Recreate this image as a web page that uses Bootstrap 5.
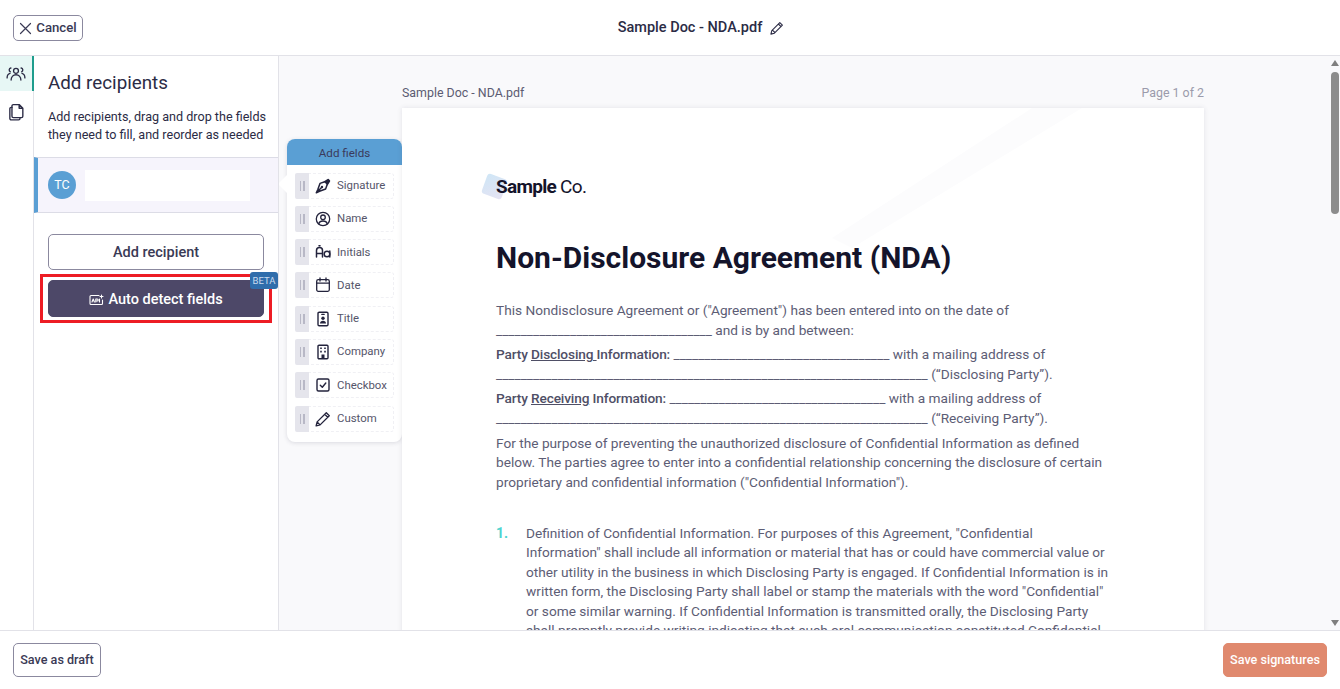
<!DOCTYPE html>
<html lang="en">
<head>
    <meta charset="UTF-8">
    <meta name="viewport" content="width=device-width, initial-scale=1.0">
    <title>Sample Doc - NDA.pdf</title>
    <link href="https://cdn.jsdelivr.net/npm/bootstrap@5.3.2/dist/css/bootstrap.min.css" rel="stylesheet">
    <style>
        html, body { height: 100%; }
        body {
            font-family: Roboto, "Liberation Sans", sans-serif;
            color: #2b2b45;
            overflow: hidden;
        }
        .app-shell { height: 689px; }
        .top-bar { height: 56px; padding: 0 13px; border-bottom: 1px solid #e2e2e8; }
        .top-side { width: 200px; }
        .top-side-end { width: 138px; }
        .btn-line {
            --bs-btn-color: #3a3a55;
            --bs-btn-border-color: #8b899f;
            --bs-btn-hover-color: #3a3a55;
            --bs-btn-hover-bg: #f4f4f8;
            --bs-btn-hover-border-color: #8b899f;
            --bs-btn-border-radius: 5px;
            font-weight: 500;
        }
        .btn-cancel { height: 26px; width: 70px; padding: 1px 0 0; font-size: 13.2px; }
        .doc-title { font-size: 14.5px; font-weight: 500; color: #2b2b45; }
        .app-middle { height: 574px; min-height: 0; }
        .side-rail { width: 34px; border-right: 1px solid #e2e2e8; }
        .rail-item { height: 35px; color: #2b2b45; }
        .rail-item-on { background: #e7f7f5; border-right: 2px solid #1e9d8d; margin-right: -1px; }
        .recip-panel { width: 245px; border-right: 1px solid #e2e2e8; background: #fff; }
        .recip-head { padding: 16px 14px 13px; }
        .recip-title { font-size: 18.8px; font-weight: 400; margin: 0 0 14px; line-height: 22px; }
        .recip-desc { font-size: 12.6px; line-height: 18px; margin: 0; color: #2b2b45; white-space: nowrap; }
        .recip-row {
            height: 56px;
            background: #f6f4fc;
            border-top: 1px solid #dcdce6;
            border-bottom: 1px solid #dcdce6;
            border-left: 4px solid #5a9fd4;
            padding-left: 10px;
        }
        .recip-avatar {
            width: 28px; height: 28px; border-radius: 50%;
            background: #5a9fd4; color: #fff; font-size: 12.5px;
        }
        .recip-input { width: 165px; height: 31px; background: #fff; margin-left: 9px; }
        .recip-actions { padding: 21px 14px 0; }
        .btn-add { height: 36px; width: 216px; padding: 1px 0 0; font-size: 14.5px; }
        .detect-box { border: 3px solid #ed1c24; margin: 4px -8px 0; padding: 3px 5px; position: relative; }
        .btn-detect {
            --bs-btn-color: #fff;
            --bs-btn-bg: #4d4868;
            --bs-btn-border-color: #4d4868;
            --bs-btn-hover-color: #fff;
            --bs-btn-hover-bg: #4d4868;
            --bs-btn-border-radius: 5px;
            height: 37px; width: 216px; padding: 2px 0 0; font-size: 14.5px; font-weight: 500;
        }
        .beta-tag {
            position: absolute; top: -5px; right: -9px;
            width: 28px; height: 17px;
            background: #2f6dab; color: #c9dcef;
            border-radius: 3px; font-size: 9.5px; line-height: 17px; text-align: center;
        }
        .doc-area { background: #f9f9fb; min-width: 0; overflow: hidden; }
        .fields-panel {
            width: 115px; height: 303px;
            margin: 83px 0 0 8px;
            background: #fff;
            border-radius: 8px;
            box-shadow: 0 1px 4px rgba(60, 60, 90, .16);
            position: relative;
        }
        .fields-panel::before {
            content: "";
            position: absolute; left: -6px; top: 38px;
            width: 14px; height: 14px;
            background: #fff;
            transform: rotate(45deg);
        }
        .fields-head {
            height: 26px; padding-top: 3px; background: #5a9fd4; color: #3a3a5c;
            border-radius: 8px 8px 0 0; font-size: 11.6px; position: relative;
        }
        .fields-list { padding: 7.5px 8px 0; gap: 7.3px; position: relative; }
        .field-chip { height: 26px; border: 1px dashed #f0f0f4; border-radius: 3px; font-size: 11.4px; color: #55556a; }
        .field-grip { width: 14px; height: 26px; background: #e5e5ec; margin: -1px 0 -1px -1px; gap: 2px; border-radius: 2px 0 0 2px; }
        .field-grip i { display: block; width: 1.5px; height: 10px; background: #b8b8c6; }
        .field-icon { width: 28px; color: #23233c; }
        .doc-col { width: 802px; padding-top: 28px; }
        .doc-meta { height: 24px; font-size: 12.4px; color: #5c5c72; }
        .doc-meta-page { color: #9b9bab; }
        .doc-page {
            background: #fff;
            height: 560px;
            box-shadow: 0 0 5px rgba(60, 60, 90, .12);
            padding: 63px 0 0 94px;
            position: relative;
        }
        .page-streak { position: absolute; top: 0; left: 380px; }
        .logo-row { height: 32px; margin-left: -15px; position: relative; }
        .logo-name { font-size: 19px; color: #14142b; margin-left: -15px; letter-spacing: -.7px; position: relative; }
        .logo-name b { font-weight: 700; }
        .doc-heading { font-size: 30px; font-weight: 700; color: #14142b; margin: 35px 0 0; line-height: 40px; white-space: nowrap; }
        .doc-text {
            font-size: 13.68px; line-height: 19.75px; color: #5d5d75; white-space: nowrap; margin: 0;
            position: relative;
        }
        .doc-intro { margin-top: 23px; }
        .doc-party { margin-top: 4.7px; }
        .doc-party strong { font-weight: 500; color: #4f4f66; letter-spacing: -.14px; }
        .doc-list { margin-top: 31px; }
        .doc-list .doc-text { line-height: 19.5px; }
        .doc-num { width: 30px; color: #4fd3cf; font-weight: 700; font-size: 14px; line-height: 19.5px; }
        .fake-scroll { width: 11px; padding-top: 4px; }
        .arrow-up { width: 0; height: 0; border: 4.5px solid transparent; border-top: 0; border-bottom: 6px solid #7f7f7f; }
        .arrow-down { width: 0; height: 0; border: 4.5px solid transparent; border-bottom: 0; border-top: 6px solid #7f7f7f; margin-bottom: 4px; }
        .scroll-thumb { width: 8px; height: 142px; background: #8c8c8c; border-radius: 4px; margin-top: 6px; }
        .bottom-bar { height: 59px; padding: 0 13px; border-top: 1px solid #e2e2e8; background: #fff; position: relative; }
        .btn-draft { height: 34px; width: 88px; padding: 1px 0 0; font-size: 12.6px; }
        .btn-save {
            --bs-btn-color: #fff;
            --bs-btn-bg: #e0896e;
            --bs-btn-border-color: #e0896e;
            --bs-btn-hover-color: #fff;
            --bs-btn-hover-bg: #d97c60;
            --bs-btn-border-radius: 5px;
            height: 34px; width: 104px; padding: 1px 0 0; font-size: 12.6px; font-weight: 500;
        }
        .ico { fill: none; stroke: currentColor; stroke-linecap: round; stroke-linejoin: round; }
    </style>
</head>
<body>
    <div class="app-shell d-flex flex-column">

        <header class="top-bar d-flex align-items-center justify-content-between">
            <div class="top-side">
                <button type="button" class="btn btn-line btn-cancel d-inline-flex align-items-center justify-content-center gap-1">
                    <svg class="ico" width="13" height="13" viewBox="0 0 13 13" stroke-width="1.2"><path d="M1.500 1.500l10 10M11.500 1.500l-10 10"/></svg>
                    Cancel
                </button>
            </div>
            <div class="doc-title d-flex align-items-center gap-2">
                Sample Doc - NDA.pdf
                <svg class="ico" width="14" height="14" viewBox="0 0 14 14" stroke-width="1.1"><path d="M9.800 1.600l2.600 2.600-8 8-3.500.9.900-3.500zM8.400 3l2.600 2.600M3 9.600l1.400 1.400"/></svg>
            </div>
            <div class="top-side-end"></div>
        </header>

        <div class="app-middle d-flex">
            <nav class="side-rail flex-shrink-0">
                <div class="rail-item rail-item-on d-flex align-items-center justify-content-center">
                    <svg class="ico" width="20" height="18" viewBox="0 0 18 16" stroke-width="1.200">
                        <circle cx="9" cy="5.200" r="2.200"/>
                        <path d="M4.600 13.500c0-3 2-4.800 4.400-4.800s4.400 1.800 4.400 4.800"/>
                        <path d="M4.400 2.600a1.800 1.800 0 0 0-.5 3.400M13.600 2.600a1.800 1.800 0 0 1 .5 3.400M1 11.500c0-2.200 1-3.600 2.600-4M17 11.500c0-2.200-1-3.600-2.600-4"/>
                    </svg>
                </div>
                <div class="rail-item d-flex align-items-center justify-content-center mt-1">
                    <svg class="ico" width="17" height="19" viewBox="0 0 16 18" stroke-width="1.300">
                        <path d="M5 1.500h5.500l3.500 3.500v7.500a1.300 1.300 0 0 1-1.300 1.300H5a1.300 1.300 0 0 1-1.300-1.300V2.800A1.300 1.300 0 0 1 5 1.500zM10.500 1.500V5H14"/>
                        <path d="M3.700 4.200H3a1.300 1.300 0 0 0-1.300 1.300v9.200A1.300 1.300 0 0 0 3 16h7a1.300 1.300 0 0 0 1.300-1.300V14"/>
                    </svg>
                </div>
            </nav>

            <aside class="recip-panel flex-shrink-0">
                <div class="recip-head">
                    <h1 class="recip-title">Add recipients</h1>
                    <p class="recip-desc">Add recipients, drag and drop the fields<br>they need to fill, and reorder as needed</p>
                </div>
                <div class="recip-row d-flex align-items-center">
                    <div class="recip-avatar d-flex align-items-center justify-content-center">TC</div>
                    <div class="recip-input"></div>
                </div>
                <div class="recip-actions">
                    <button type="button" class="btn btn-line btn-add">Add recipient</button>
                    <div class="detect-box">
                        <button type="button" class="btn btn-detect d-flex align-items-center justify-content-center gap-1">
                            <svg class="ico" width="15" height="12" viewBox="0 0 15 12" stroke-width="1.100">
                                <path d="M10 1.500H2a1 1 0 0 0-1 1v7a1 1 0 0 0 1 1h10.500a1 1 0 0 0 1-1V6"/>
                                <path d="M3 8l1.200-3 1.200 3M6.800 8V5h1.400a1 1 0 0 1 0 2H6.800M10.500 5v3"/>
                                <path d="M12.500 1v3M11 2.500h3"/>
                            </svg>
                            Auto detect fields
                        </button>
                        <span class="beta-tag">BETA</span>
                    </div>
                </div>
            </aside>

            <main class="doc-area flex-grow-1 d-flex">
                <section class="fields-panel flex-shrink-0">
                    <div class="fields-head d-flex align-items-center justify-content-center">Add fields</div>
                    <div class="fields-list d-flex flex-column">
                        <div class="field-chip d-flex align-items-center">
                            <span class="field-grip d-flex align-items-center justify-content-center"><i></i><i></i></span>
                            <span class="field-icon d-flex justify-content-center">
                                <svg width="16" height="16" viewBox="0 0 16 16"><path class="ico" stroke-width="1.500" d="M9.800 3.700L5 5.400 2.800 11.500 1.300 14.700l3.200-1.500 6.100-2.200 1.700-4.800M1.500 14.500L6.300 9.700"/><circle fill="currentColor" cx="7" cy="9" r="1.200"/><path fill="currentColor" d="M8.600 3.400L12.600.9a1 1 0 0 1 1.200.2l1.100 1.100a1 1 0 0 1 .2 1.200l-2.500 4z"/></svg>
                            </span>
                            Signature
                        </div>
                        <div class="field-chip d-flex align-items-center">
                            <span class="field-grip d-flex align-items-center justify-content-center"><i></i><i></i></span>
                            <span class="field-icon d-flex justify-content-center">
                                <svg class="ico" width="16" height="16" viewBox="0 0 16 16" stroke-width="1.300"><circle cx="8" cy="8" r="6.700"/><circle cx="8" cy="6.300" r="2.300"/><path d="M3.700 12.800c.6-1.800 2.300-2.800 4.300-2.800s3.700 1 4.300 2.800"/></svg>
                            </span>
                            Name
                        </div>
                        <div class="field-chip d-flex align-items-center">
                            <span class="field-grip d-flex align-items-center justify-content-center"><i></i><i></i></span>
                            <span class="field-icon d-flex justify-content-center">
                                <svg class="ico" width="16" height="16" viewBox="0 0 16 16" stroke-width="1.500"><path d="M1.500 13V6.500a3 3 0 0 1 6 0V13M1.500 9.500h6"/><path d="M4 1.800h1"/><circle cx="12" cy="10" r="2.800"/><path d="M14.800 7v6"/></svg>
                            </span>
                            Initials
                        </div>
                        <div class="field-chip d-flex align-items-center">
                            <span class="field-grip d-flex align-items-center justify-content-center"><i></i><i></i></span>
                            <span class="field-icon d-flex justify-content-center">
                                <svg class="ico" width="16" height="16" viewBox="0 0 16 16" stroke-width="1.300"><rect x="1.700" y="2.700" width="12.600" height="11.600" rx="1.500"/><path d="M1.700 6.200h12.600M5 1v3M11 1v3"/></svg>
                            </span>
                            Date
                        </div>
                        <div class="field-chip d-flex align-items-center">
                            <span class="field-grip d-flex align-items-center justify-content-center"><i></i><i></i></span>
                            <span class="field-icon d-flex justify-content-center">
                                <svg width="16" height="16" viewBox="0 0 16 16"><rect class="ico" stroke-width="1.400" x="3" y="1.200" width="10" height="13.600" rx="1.200"/><path class="ico" stroke-width="1.200" d="M6.800 3.400h2.400"/><circle fill="currentColor" cx="8" cy="7.300" r="1.700"/><path fill="currentColor" d="M5 12.500c0-1.800 1.300-2.800 3-2.800s3 1 3 2.800z"/></svg>
                            </span>
                            Title
                        </div>
                        <div class="field-chip d-flex align-items-center">
                            <span class="field-grip d-flex align-items-center justify-content-center"><i></i><i></i></span>
                            <span class="field-icon d-flex justify-content-center">
                                <svg width="16" height="16" viewBox="0 0 16 16"><rect class="ico" stroke-width="1.400" x="3" y="1.200" width="10" height="13.600" rx="1"/><path fill="currentColor" d="M5.200 3.500h1.600v1.600H5.200zM9.200 3.500h1.600v1.600H9.200zM5.200 6.800h1.600v1.600H5.200zM9.200 6.800h1.600v1.600H9.200zM6.500 10.500h3v4.300h-3z"/></svg>
                            </span>
                            Company
                        </div>
                        <div class="field-chip d-flex align-items-center">
                            <span class="field-grip d-flex align-items-center justify-content-center"><i></i><i></i></span>
                            <span class="field-icon d-flex justify-content-center">
                                <svg class="ico" width="16" height="16" viewBox="0 0 16 16" stroke-width="1.400"><rect x="2" y="2" width="12" height="12" rx="1.500"/><path d="M5.300 8.200l2 2 3.500-4.200"/></svg>
                            </span>
                            Checkbox
                        </div>
                        <div class="field-chip d-flex align-items-center">
                            <span class="field-grip d-flex align-items-center justify-content-center"><i></i><i></i></span>
                            <span class="field-icon d-flex justify-content-center">
                                <svg class="ico" width="16" height="16" viewBox="0 0 16 16" stroke-width="1.300"><path d="M11.300 1.700l3 3-9.200 9.200-4 1 1-4zM9.700 3.300l3 3M2.100 10.900l3 3"/></svg>
                            </span>
                            Custom
                        </div>
                    </div>
                </section>

                <section class="doc-col flex-shrink-0">
                    <div class="doc-meta d-flex justify-content-between">
                        <span>Sample Doc - NDA.pdf</span>
                        <span class="doc-meta-page">Page 1 of 2</span>
                    </div>
                    <article class="doc-page">
                        <svg class="page-streak" width="320" height="140" viewBox="0 0 320 140"><polygon fill="#fcfcfd" points="50,130 250,0 300,0 70,140"/></svg>
                        <div class="logo-row d-flex align-items-center">
                            <svg width="30" height="32" viewBox="0 0 30 32">
                                <defs><linearGradient id="logoFill" x1="0" y1="0" x2="1" y2="1"><stop offset="0" stop-color="#cfe6f6"/><stop offset="1" stop-color="#e6e3f3"/></linearGradient></defs>
                                <rect x="3" y="5" width="21" height="21" rx="3" fill="url(#logoFill)" transform="rotate(20 13.500 15.500)"/>
                            </svg>
                            <span class="logo-name"><b>Sample</b> Co.</span>
                        </div>
                        <h2 class="doc-heading">Non-Disclosure Agreement (NDA)</h2>
                        <p class="doc-text doc-intro">This Nondisclosure Agreement or ("Agreement") has been entered into on the date of<br>___________________________________ and is by and between:</p>
                        <p class="doc-text doc-party"><strong>Party <u>Disclosing </u>Information:</strong> ___________________________________ with a mailing address of<br>______________________________________________________________________ (“Disclosing Party”).</p>
                        <p class="doc-text doc-party"><strong>Party <u>Receiving</u> Information:</strong> ___________________________________ with a mailing address of<br>______________________________________________________________________ (“Receiving Party”).</p>
                        <p class="doc-text doc-party">For the purpose of preventing the unauthorized disclosure of Confidential Information as defined<br>below. The parties agree to enter into a confidential relationship concerning the disclosure of certain<br>proprietary and confidential information ("Confidential Information").</p>
                        <div class="doc-list d-flex">
                            <div class="doc-num">1.</div>
                            <p class="doc-text">Definition of Confidential Information. For purposes of this Agreement, "Confidential<br>Information" shall include all information or material that has or could have commercial value or<br>other utility in the business in which Disclosing Party is engaged. If Confidential Information is in<br>written form, the Disclosing Party shall label or stamp the materials with the word "Confidential"<br>or some similar warning. If Confidential Information is transmitted orally, the Disclosing Party<br>shall promptly provide writing indicating that such oral communication constituted Confidential</p>
                        </div>
                    </article>
                </section>

                <div class="flex-grow-1"></div>
                <div class="fake-scroll d-flex flex-column align-items-center justify-content-between flex-shrink-0">
                    <div class="d-flex flex-column align-items-center">
                        <div class="arrow-up"></div>
                        <div class="scroll-thumb"></div>
                    </div>
                    <div class="arrow-down"></div>
                </div>
            </main>
        </div>

        <footer class="bottom-bar d-flex align-items-center justify-content-between">
            <button type="button" class="btn btn-line btn-draft">Save as draft</button>
            <button type="button" class="btn btn-save">Save signatures</button>
        </footer>
    </div>

    <script src="https://cdn.jsdelivr.net/npm/bootstrap@5.3.2/dist/js/bootstrap.bundle.min.js"></script>
</body>
</html>
